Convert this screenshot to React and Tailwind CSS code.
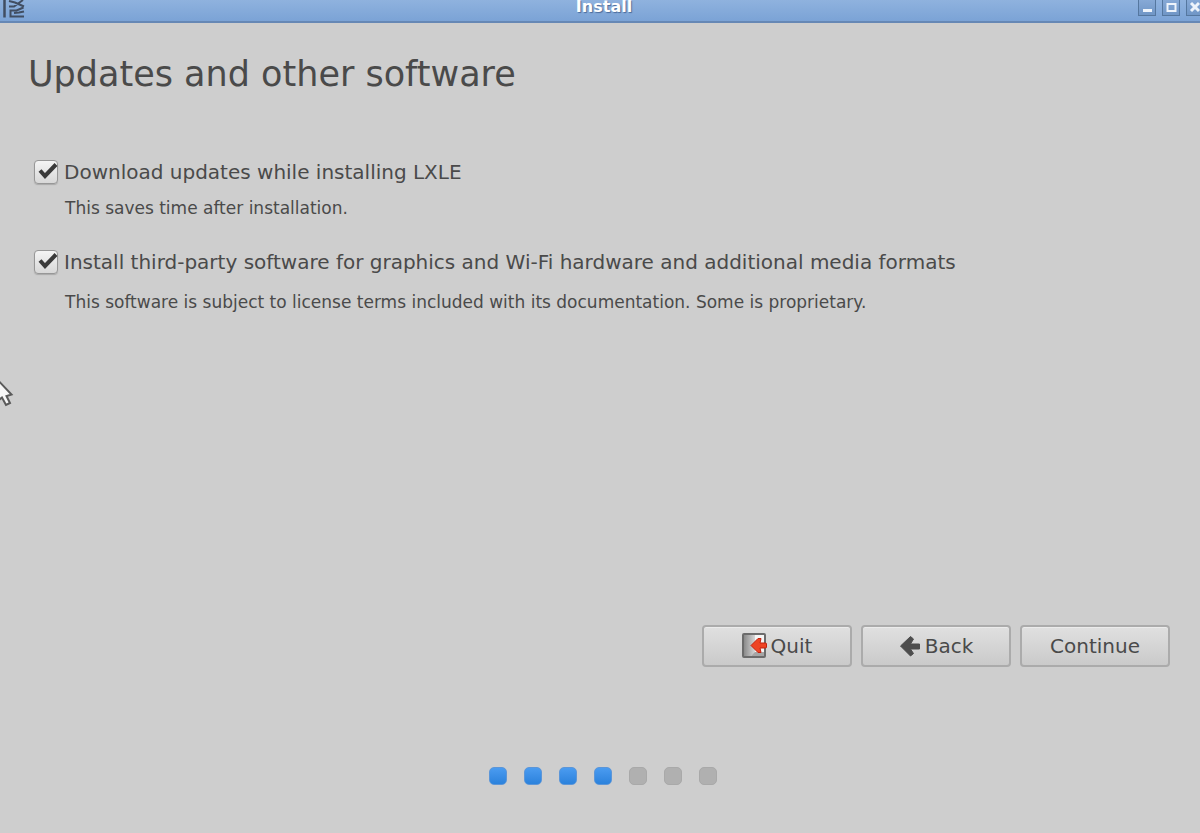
const OPTIONS = [
  {
    id: "updates",
    label: "Download updates while installing LXLE",
    note: "This saves time after installation.",
  },
  {
    id: "third-party",
    label: "Install third-party software for graphics and Wi-Fi hardware and additional media formats",
    note: "This software is subject to license terms included with its documentation. Some is proprietary.",
    roomy: true,
  },
];

const STEPS = [true, true, true, true, false, false, false];

function WindowButton({ label, children }) {
  return (
    <button
      type="button"
      aria-label={label}
      className="flex h-4 w-[18px] shrink-0 items-center justify-center border border-t-0 border-[#55779f] bg-linear-to-b from-[#86a9d6] to-[#7096c6]"
    >
      <svg viewBox="0 0 16 16" className="h-4 w-4 shrink-0" fill="none" stroke="#eef4fb">
        {children}
      </svg>
    </button>
  );
}

function TitleBar() {
  return (
    <header className="relative flex h-[23px] items-start justify-between overflow-hidden border-b-2 border-[#6688b5] bg-linear-to-b from-[#8fb2de] to-[#7ba3d6]">
      <svg viewBox="0 0 28 20" className="h-5 w-7" fill="none" stroke="#414e62">
        <path d="M4.500 0v17.500" strokeWidth="2.500" />
        <path d="M9 1l6 1.500 9 4M9 6.500h5l9-6.500M10.500 16.500V10.500h6l7-3M9.500 16.500h14.500M14 13l5-.5 5-1" strokeWidth="2" />
      </svg>
      <h2 className="absolute inset-x-0 top-0 pl-2 text-center text-base leading-[14px] font-bold text-white [text-shadow:1px_1px_1px_#4a6a99]">
        Install
      </h2>
      <div className="-mr-1 flex gap-[6px]">
        <WindowButton label="Minimize">
          <path d="M4 10.500h9" strokeWidth="3" />
        </WindowButton>
        <WindowButton label="Maximize">
          <rect x="4.500" y="4" width="8" height="7" strokeWidth="2" />
        </WindowButton>
        <WindowButton label="Close">
          <path d="M4 3l8 8M12 3l-8 8" strokeWidth="3" />
        </WindowButton>
      </div>
    </header>
  );
}

function Option({ id, label, note, roomy = false }) {
  return (
    <div className={roomy ? "flex flex-col gap-4" : "flex flex-col gap-3"}>
      <div className="flex items-center gap-[6px]">
        <span className="relative h-6 w-6 shrink-0">
          <input
            id={id}
            type="checkbox"
            defaultChecked
            className="peer block h-6 w-6 appearance-none rounded-[4px] border border-[#979797] bg-linear-to-b from-[#f4f4f4] to-[#d8d8d8] shadow-[0_1px_1px_#aaaaaa]"
          />
          <svg
            viewBox="0 0 24 24"
            className="pointer-events-none absolute inset-0 hidden h-6 w-6 peer-checked:block"
            fill="none"
            stroke="#3a3a3a"
            strokeWidth="4"
          >
            <path d="M6 10.500l5 5.500 11-11.500" />
          </svg>
        </span>
        <label htmlFor={id} className="text-xl leading-6">
          {label}
        </label>
      </div>
      <p className="pl-[31px] text-[17px] leading-6">{note}</p>
    </div>
  );
}

function ActionButton({ icon, children }) {
  return (
    <button
      type="button"
      className="flex h-[42px] w-[150px] items-center justify-center gap-1 rounded-[4px] border-2 border-[#ababab] bg-linear-to-b from-[#e0e0e0] to-[#cacaca] text-xl leading-6 shadow-[inset_0_1px_0_#ebebeb]"
    >
      {icon}
      {children}
    </button>
  );
}

function QuitIcon() {
  return (
    <svg viewBox="0 0 25 26" className="h-[26px] w-[25px]">
      <defs>
        <linearGradient id="door" x1="0" x2="1">
          <stop offset="0" stopColor="#8b8b8b" />
          <stop offset="1" stopColor="#d6d6d6" />
        </linearGradient>
      </defs>
      <rect x="1" y="1" width="22" height="23" rx="1" fill="#f5f5f5" stroke="#6c6c6c" strokeWidth="2" />
      <path d="M2 2h11v18L9 23H2z" fill="url(#door)" />
      <path d="M2 23h7l4-4h9v4z" fill="#a6a6a6" />
      <path
        d="M9 12.500l7-7h3l-1 4.500h5.500q1 0 1 1v3q0 1-1 1H18l1 4.500h-3z"
        fill="#ee4424"
        stroke="#c3200d"
        strokeLinejoin="round"
      />
    </svg>
  );
}

function BackIcon() {
  return (
    <svg viewBox="0 0 22 22" className="h-[22px] w-[22px]">
      <path
        d="M1.500 11L11.500 1.500l3 2.500-3 5h9v5h-9l3 4.500-3 2.500z"
        fill="#4d4d4d"
        stroke="#4d4d4d"
        strokeLinejoin="round"
      />
    </svg>
  );
}

export default function App() {
  return (
    <div className="relative flex min-h-screen flex-col overflow-hidden bg-[#cecece] font-['DejaVu_Sans',sans-serif] text-[#4a4a4a]">
      <TitleBar />
      <main className="flex grow flex-col px-7 pt-7">
        <h1 className="text-[35px] leading-[46px]">Updates and other software</h1>
        <form className="mt-[63px] flex flex-col gap-[30px] pl-[6px]">
          {OPTIONS.map((option) => (
            <Option key={option.id} {...option} />
          ))}
        </form>
      </main>
      <footer className="flex flex-col gap-[100px] pb-12">
        <div className="flex justify-end gap-[9px] pr-[30px]">
          <ActionButton icon={<QuitIcon />}>Quit</ActionButton>
          <ActionButton icon={<BackIcon />}>Back</ActionButton>
          <ActionButton>Continue</ActionButton>
        </div>
        <div className="flex justify-center gap-[17px] pl-[5px]">
          {STEPS.map((done, i) => (
            <span
              key={i}
              className={
                done
                  ? "h-[18px] w-[18px] rounded-[5px] border border-[#5c96d8] bg-linear-to-b from-[#4a9bf0] to-[#2b82dc]"
                  : "h-[18px] w-[18px] rounded-[5px] border border-[#a9a9a9] bg-[#b0b0b0]"
              }
            />
          ))}
        </div>
      </footer>
      <svg viewBox="0 0 14 28" className="pointer-events-none absolute top-[380px] left-0 h-7 w-[14px]">
        <path
          d="M-6-4L11.500 14.500 6.500 16l3.500 7-4 2-4-7.500-6 5z"
          fill="#f6f6f6"
          stroke="#5a5a5a"
          strokeWidth="2"
        />
      </svg>
    </div>
  );
}
